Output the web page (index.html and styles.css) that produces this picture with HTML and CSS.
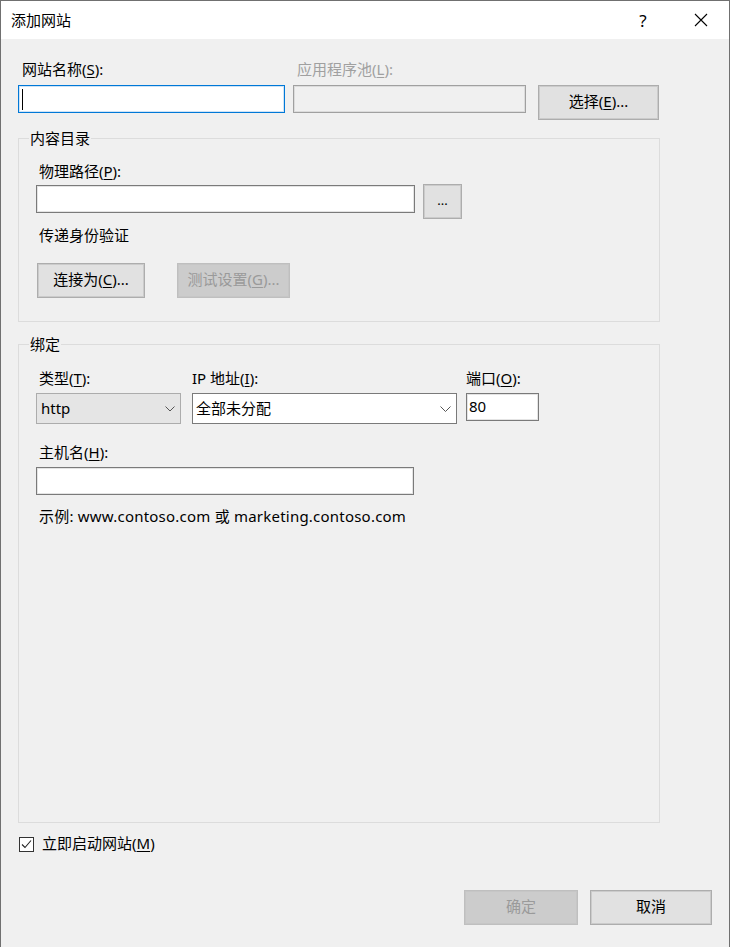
FILE: index.html
```html
<!DOCTYPE html>
<html lang="zh-CN">
<head>
<meta charset="utf-8">
<title>添加网站</title>
<link rel="stylesheet" href="styles.css">
</head>
<body>
<div class="window">
  <div class="titlebar">
    <span class="title">添加网站</span>
    <span class="tb-btn help">?</span>
    <span class="tb-btn close">
      <svg width="14" height="14" viewBox="0 0 14 14"><path d="M1 1L13 13M13 1L1 13" stroke="#000" stroke-width="1.1" fill="none"/></svg>
    </span>
  </div>

  <div class="content">
    <div class="top-labels">
      <span class="lbl lbl-name">网站名称(<u>S</u>):</span>
      <span class="lbl lbl-pool disabled-text">应用程序池(<u>L</u>):</span>
    </div>
    <div class="top-controls">
      <div class="field focused name-field"><span class="caret"></span></div>
      <div class="field disabled-field pool-field"></div>
      <button class="btn select-btn">选择(<u>E</u>)...</button>
    </div>

    <fieldset class="group group-content">
      <legend>内容目录</legend>
      <div class="group-body body-content">
        <div class="lbl sub-lbl">物理路径(<u>P</u>):</div>
        <div class="path-row">
          <div class="field path-field"></div>
          <button class="btn browse-btn">...</button>
        </div>
        <div class="lbl sub-lbl pass-lbl">传递身份验证</div>
        <div class="auth-row">
          <button class="btn connect-btn">连接为(<u>C</u>)...</button>
          <button class="btn btn-disabled test-btn">测试设置(<u>G</u>)...</button>
        </div>
      </div>
    </fieldset>

    <fieldset class="group group-binding">
      <legend>绑定</legend>
      <div class="group-body body-binding">
        <div class="binding-row">
          <div class="col col-type">
            <div class="lbl col-lbl type-lbl">类型(<u>T</u>):</div>
            <div class="combo combo-type">
              <span class="combo-text">http</span>
              <svg class="chev" width="10" height="6" viewBox="0 0 10 6"><path d="M0.5 0.5L5 5L9.5 0.5" stroke="#555" stroke-width="1" fill="none"/></svg>
            </div>
          </div>
          <div class="col col-ip">
            <div class="lbl col-lbl">IP 地址(<u>I</u>):</div>
            <div class="combo combo-ip">
              <span class="combo-text">全部未分配</span>
              <svg class="chev" width="11" height="6" viewBox="0 0 11 6"><path d="M0.5 0.5L5.5 5.5L10.5 0.5" stroke="#555" stroke-width="1" fill="none"/></svg>
            </div>
          </div>
          <div class="col col-port">
            <div class="lbl col-lbl">端口(<u>O</u>):</div>
            <div class="field port-field">80</div>
          </div>
        </div>
        <div class="lbl sub-lbl host-lbl">主机名(<u>H</u>):</div>
        <div class="field host-field"></div>
        <div class="lbl sub-lbl example">示例: www.contoso.com 或 marketing.contoso.com</div>
      </div>
    </fieldset>

    <div class="check-row">
      <span class="checkbox">
        <svg width="13" height="13" viewBox="0 0 13 13"><path d="M2 6.5L5 9.5L11 2.5" stroke="#222" stroke-width="1.1" fill="none"/></svg>
      </span>
      <span class="check-lbl">立即启动网站(<u>M</u>)</span>
    </div>

    <div class="dialog-buttons">
      <button class="btn btn-disabled ok-btn">确定</button>
      <button class="btn cancel-btn">取消</button>
    </div>
  </div>
</div>
</body>
</html>
```

FILE: styles.css
```css
* {
  box-sizing: border-box;
}

html,
body {
  margin: 0;
  background: #ffffff;
}

body {
  font-family: "Noto Sans", "Noto Sans CJK SC", sans-serif;
  font-size: 15px;
  line-height: 20px;
  color: #000000;
}

u {
  text-decoration: underline;
  text-underline-offset: 2px;
  text-decoration-thickness: 1px;
}

.window {
  width: 730px;
  height: 947px;
  border: 1px solid #707070;
  border-bottom: 0;
  background: #f0f0f0;
  display: flex;
  flex-direction: column;
  overflow: hidden;
}

/* title bar */
.titlebar {
  flex: none;
  height: 38px;
  background: #ffffff;
  display: flex;
  align-items: center;
}

.title {
  padding-left: 10px;
  padding-bottom: 1px;
}

.tb-btn {
  height: 38px;
  display: flex;
  align-items: center;
  justify-content: center;
}

.help {
  margin-left: auto;
  width: 58px;
  font-size: 17px;
  padding-top: 1px;
}

.close {
  width: 57px;
}

/* content */
.content {
  flex: 1;
  display: flex;
  flex-direction: column;
  padding: 20px 17px 0 17px;
}

.top-labels {
  display: flex;
  height: 20px;
}

.lbl-name {
  width: 275px;
  padding-left: 4px;
}

.lbl-pool {
  padding-left: 4px;
}

.disabled-text {
  color: #a0a0a0;
}

.top-controls {
  display: flex;
  align-items: flex-start;
  margin-top: 6px;
}

/* fields */
.field {
  height: 28px;
  background: #ffffff;
  border: 1px solid #7a7a7a;
  box-shadow: inset 0 0 0 1px #e4e4e4;
}

.focused {
  border-color: #0078d7;
  box-shadow: inset 0 0 0 1px #cfe3f5;
  display: flex;
  align-items: flex-start;
}

.caret {
  width: 1px;
  height: 21px;
  margin: 3px 0 0 3px;
  background: #000000;
}

.disabled-field {
  background: #f0f0f0;
  border-color: #a0a0a0;
  box-shadow: inset 0 0 0 1px #dcdcdc;
}

.name-field {
  width: 267px;
}

.pool-field {
  width: 233px;
  margin-left: 8px;
}

/* buttons */
.btn {
  height: 35px;
  padding: 0 0 3px;
  font: inherit;
  color: #000000;
  background: #e1e1e1;
  border: 1px solid #adadad;
  box-shadow: inset 0 0 0 1px #cbcbcb;
  text-align: center;
}

.btn-disabled {
  background: #cccccc;
  border-color: #bfbfbf;
  box-shadow: inset 0 0 0 1px #c6c6c6;
  color: #9a9a9a;
}

.select-btn {
  width: 121px;
  margin-left: 12px;
}

/* group boxes */
.group {
  margin: 0;
  padding: 0;
  min-width: 0;
  width: 642px;
  border: 1px solid #dcdcdc;
}

.group legend {
  margin-left: 10px;
  padding: 0 1px;
  line-height: 20px;
}

.group-content {
  margin-top: 8px;
}

.group-binding {
  margin-top: 12px;
}

.group-body {
  padding-left: 17px;
}

.body-content {
  padding-top: 13px;
  padding-bottom: 23px;
}

.body-binding {
  padding-top: 14px;
  height: 468px;
}

.sub-lbl {
  padding-left: 3px;
}

.path-row {
  display: flex;
  align-items: flex-start;
  margin-top: 3px;
}

.path-field {
  width: 379px;
  margin-top: 1px;
}

.browse-btn {
  width: 39px;
  margin-left: 8px;
  font-size: 13px;
}

.pass-lbl {
  margin-top: 6px;
}

.auth-row {
  display: flex;
  margin-top: 18px;
}

.connect-btn {
  width: 108px;
  margin-left: 1px;
}

.test-btn {
  width: 113px;
  margin-left: 32px;
}

/* binding */
.binding-row {
  display: flex;
  align-items: flex-start;
}

.col-type {
  width: 145px;
}

.col-ip {
  width: 265px;
  margin-left: 11px;
}

.col-port {
  width: 73px;
  margin-left: 9px;
}

.type-lbl {
  padding-left: 3px;
}

.combo {
  margin-top: 5px;
  height: 31px;
  display: flex;
  align-items: center;
  padding-bottom: 2px;
  border: 1px solid #7a7a7a;
  background: #ffffff;
}

.combo-type {
  background: #e5e5e5;
  border-color: #acacac;
  padding-left: 4px;
}

.combo-ip {
  padding-left: 3px;
}

.combo-text {
  flex: 1;
}

.chev {
  margin-right: 5px;
  margin-top: 3px;
}

.port-field {
  margin-top: 5px;
  padding-left: 2px;
  line-height: 24px;
}

.host-lbl {
  margin-top: 18px;
}

.host-field {
  width: 378px;
  margin-top: 5px;
}

.example {
  margin-top: 11px;
  letter-spacing: 0.22px;
}

/* checkbox */
.check-row {
  display: flex;
  align-items: flex-start;
  margin-top: 10px;
  height: 20px;
}

.checkbox {
  width: 15px;
  height: 15px;
  margin: 4px 0 0 1px;
  border: 1px solid #333333;
  background: #ffffff;
  display: flex;
  align-items: center;
  justify-content: center;
}

.check-lbl {
  margin-left: 8px;
}

/* dialog buttons */
.dialog-buttons {
  display: flex;
  justify-content: flex-end;
  margin-top: 37px;
}

.ok-btn {
  width: 114px;
}

.cancel-btn {
  width: 122px;
  margin-left: 12px;
}
```
